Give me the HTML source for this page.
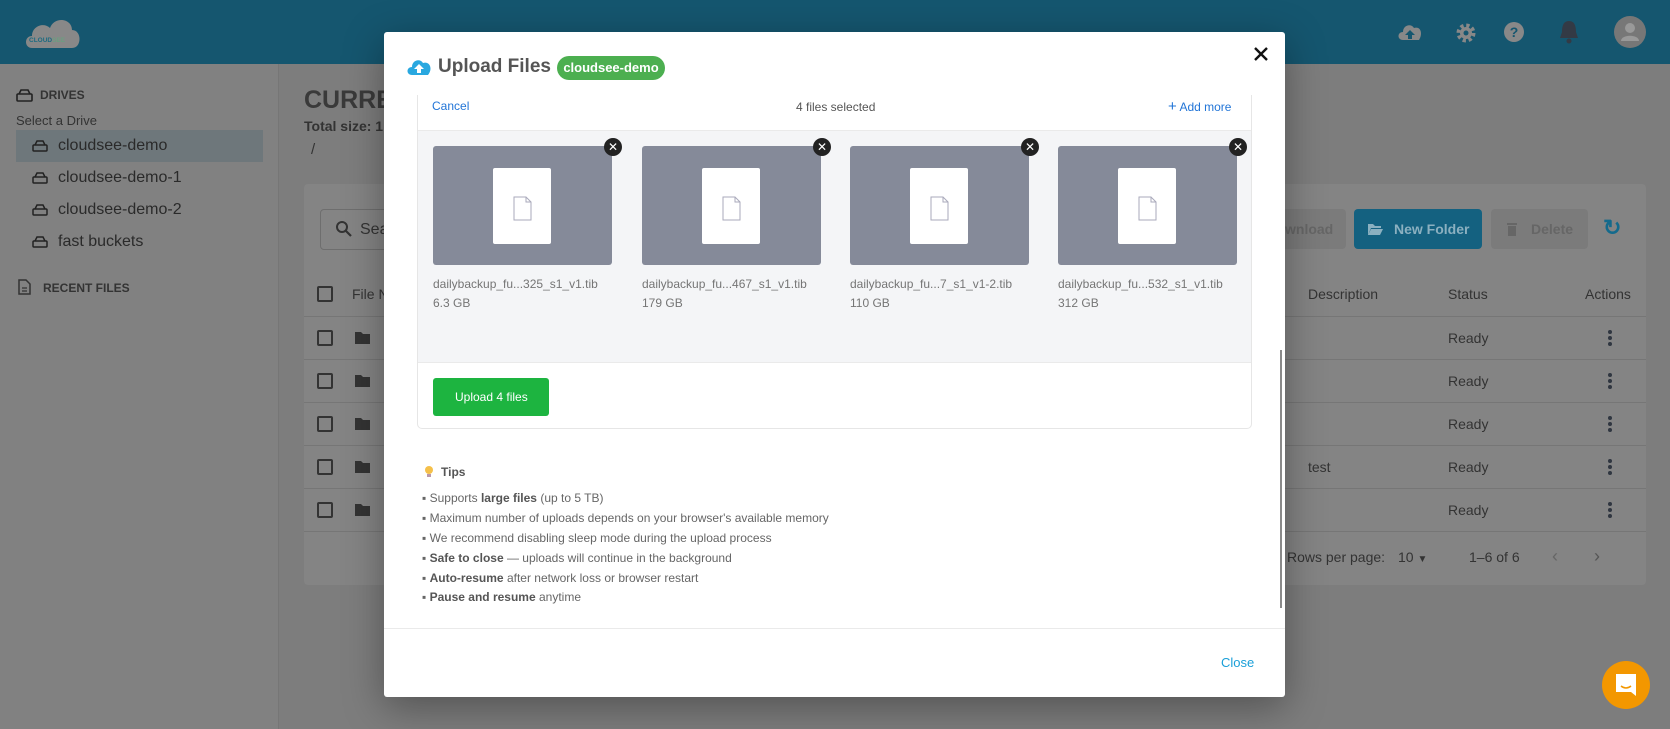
<!DOCTYPE html>
<html><head><meta charset="utf-8"><style>
*{box-sizing:border-box;margin:0;padding:0}
body{width:1670px;height:729px;overflow:hidden;font-family:"Liberation Sans",sans-serif;background:#7d7d7d;position:relative}
.abs{position:absolute}
.hdr{left:0;top:0;width:1670px;height:64px;background:#15566f}
.side{left:0;top:64px;width:279px;height:665px;background:#818181;border-right:1px solid #767676}
.t{position:absolute;white-space:nowrap}
.card{left:304px;top:184px;width:1342px;height:401px;background:#848484;border-radius:4px}
.row{position:absolute;left:304px;width:1342px;height:1px;background:#767676}
.modal{left:384px;top:32px;width:901px;height:665px;background:#fff;border-radius:3px;box-shadow:0 10px 40px rgba(0,0,0,.35)}
.thumb{position:absolute;top:146px;width:179px;height:119px;background:#858a99;border-radius:3px}
.doc{position:absolute;left:60px;top:22px;width:58px;height:76px;background:#fff;border-radius:2px}
.xbtn{position:absolute;right:-10px;top:-8px;width:18px;height:18px;border-radius:50%;background:#222;color:#fff;font-size:12px;line-height:18px;text-align:center}
.fn{position:absolute;font-size:12px;color:#757575;white-space:nowrap}
.tip{position:absolute;left:422px;font-size:12px;color:#666;white-space:nowrap}
.tip b{color:#555}
.dots{position:absolute;width:4px}
.dots i{display:block;width:4px;height:4px;border-radius:50%;background:#2f3640;margin-bottom:2px}
.cb{position:absolute;left:317px;width:16px;height:16px;border:2px solid #333;border-radius:2px}
.drv{position:absolute;left:32px}
</style></head><body>
<div class="abs hdr"></div>
<svg class="abs" style="left:24px;top:12px" width="64" height="40"><path d="M8 36 C0 36 0 24 8 24 C8 14 20 10 26 16 C30 4 48 6 48 18 C58 18 58 36 48 36Z" fill="#888"/><text x="5" y="30" font-size="6.5" font-weight="bold" fill="#1d6b80" font-family="Liberation Sans">CLOUD<tspan fill="#6b9e80">SEE</tspan></text></svg>
<svg class="abs" style="left:1397px;top:22px" width="26" height="20"><path d="M6 18 C0 18 0 10 6 10 C6 3 14 1 17 6 C24 4 26 12 22 18Z" fill="#888"/><path d="M13 8 L8 13 H11 V17 H15 V13 H18Z" fill="#15566f"/></svg>
<svg class="abs" style="left:1455px;top:22px" width="22" height="22"><circle cx="11" cy="11" r="7" fill="none" stroke="#888" stroke-width="5" stroke-dasharray="3 2.5"/><circle cx="11" cy="11" r="6" fill="#888"/><circle cx="11" cy="11" r="2.5" fill="#15566f"/></svg>
<svg class="abs" style="left:1503px;top:21px" width="22" height="22"><circle cx="11" cy="11" r="10" fill="#888"/><text x="11" y="16" font-size="14" font-weight="bold" fill="#15566f" text-anchor="middle" font-family="Liberation Sans">?</text></svg>
<svg class="abs" style="left:1558px;top:19px" width="22" height="26"><path d="M11 2 C5 2 4 8 4 13 L2 19 H20 L18 13 C18 8 17 2 11 2Z" fill="#333a45"/><circle cx="11" cy="22" r="2.5" fill="#333a45"/></svg>
<svg class="abs" style="left:1614px;top:16px" width="32" height="32"><circle cx="16" cy="16" r="16" fill="#777"/><circle cx="16" cy="12" r="5" fill="#999"/><path d="M7 25 C7 18 25 18 25 25Z" fill="#999"/></svg>

<div class="abs side"></div>
<svg class="abs" style="left:16px;top:89px" width="17" height="13"><rect x="1" y="5" width="15" height="7" rx="1" fill="none" stroke="#222" stroke-width="1.6"/><path d="M3 5 L5 1 H12 L14 5" fill="none" stroke="#222" stroke-width="1.6"/></svg>
<div class="t" style="left:40px;top:88px;font-size:12px;font-weight:bold;color:#333">DRIVES</div>
<div class="t" style="left:16px;top:113px;font-size:13px;color:#333">Select a Drive</div>
<div class="abs" style="left:16px;top:130px;width:247px;height:32px;background:#6e777b"></div>
<svg class="drv" style="top:140px" width="16" height="12"><rect x="1" y="5" width="14" height="6" rx="1" fill="none" stroke="#222" stroke-width="1.5"/><path d="M3 5 L5 1 H11 L13 5" fill="none" stroke="#222" stroke-width="1.5"/></svg>
<svg class="drv" style="top:172px" width="16" height="12"><rect x="1" y="5" width="14" height="6" rx="1" fill="none" stroke="#222" stroke-width="1.5"/><path d="M3 5 L5 1 H11 L13 5" fill="none" stroke="#222" stroke-width="1.5"/></svg>
<svg class="drv" style="top:204px" width="16" height="12"><rect x="1" y="5" width="14" height="6" rx="1" fill="none" stroke="#222" stroke-width="1.5"/><path d="M3 5 L5 1 H11 L13 5" fill="none" stroke="#222" stroke-width="1.5"/></svg>
<svg class="drv" style="top:236px" width="16" height="12"><rect x="1" y="5" width="14" height="6" rx="1" fill="none" stroke="#222" stroke-width="1.5"/><path d="M3 5 L5 1 H11 L13 5" fill="none" stroke="#222" stroke-width="1.5"/></svg>
<div class="t" style="left:58px;top:137px;font-size:16px;color:#2a2a2a">cloudsee-demo</div>
<div class="t" style="left:58px;top:169px;font-size:16px;color:#2a2a2a">cloudsee-demo-1</div>
<div class="t" style="left:58px;top:201px;font-size:16px;color:#2a2a2a">cloudsee-demo-2</div>
<div class="t" style="left:58px;top:233px;font-size:16px;color:#2a2a2a">fast buckets</div>
<svg class="abs" style="left:18px;top:279px" width="13" height="16"><path d="M1 1 H8 L12 5 V15 H1Z" fill="none" stroke="#333" stroke-width="1.5"/><path d="M4 9 H9 M4 12 H9" stroke="#333" stroke-width="1.2"/></svg>
<div class="t" style="left:43px;top:281px;font-size:12px;font-weight:bold;color:#333">RECENT FILES</div>

<div class="t" style="left:304px;top:86px;font-size:25px;font-weight:bold;color:#3a3a3a">CURRENT</div>
<div class="t" style="left:304px;top:118px;font-size:14px;font-weight:bold;color:#333">Total size: 1</div>
<div class="t" style="left:311px;top:141px;font-size:15px;color:#333">/</div>
<div class="abs card"></div>
<div class="abs" style="left:320px;top:209px;width:80px;height:41px;border:1px solid #6e6e6e;border-radius:4px"></div>
<svg class="abs" style="left:335px;top:220px" width="18" height="18"><circle cx="7" cy="7" r="5" fill="none" stroke="#333" stroke-width="2"/><path d="M11 11 L16 16" stroke="#333" stroke-width="2.2"/></svg>
<div class="t" style="left:360px;top:221px;font-size:16px;color:#333">Sea</div>
<div class="abs" style="left:1280px;top:209px;width:66px;height:40px;background:#7b7b7b;border-radius:4px"></div>
<div class="t" style="left:1285px;top:221px;font-size:14px;color:#666;font-weight:bold">wnload</div>
<div class="abs" style="left:1354px;top:209px;width:128px;height:40px;background:#146180;border-radius:4px"></div>
<svg class="abs" style="left:1367px;top:222px" width="17" height="14"><path d="M1 2 H6 L8 4 H14 V6 H4 L1 13Z M4 7 H16 L13 13 H1Z" fill="#8bb0c0"/></svg>
<div class="t" style="left:1394px;top:221px;font-size:14px;color:#8bb0c0;font-weight:bold">New Folder</div>
<div class="abs" style="left:1491px;top:209px;width:97px;height:40px;background:#7b7b7b;border-radius:4px"></div>
<svg class="abs" style="left:1506px;top:221px" width="12" height="16"><path d="M1 2 H11 V4 H1Z M2 5 H10 V15 H2Z" fill="#666"/></svg>
<div class="t" style="left:1531px;top:221px;font-size:14px;color:#666;font-weight:bold">Delete</div>
<div class="t" style="left:1603px;top:215px;font-size:22px;color:#146a8c;font-weight:bold">↻</div>
<div class="cb" style="top:286px"></div>
<div class="t" style="left:352px;top:286px;font-size:14px;color:#333">File N</div>
<div class="t" style="left:1308px;top:286px;font-size:14px;color:#333">Description</div>
<div class="t" style="left:1448px;top:286px;font-size:14px;color:#333">Status</div>
<div class="t" style="left:1585px;top:286px;font-size:14px;color:#333">Actions</div>
<div class="row" style="top:316px"></div><div class="row" style="top:359px"></div><div class="row" style="top:402px"></div><div class="row" style="top:445px"></div><div class="row" style="top:488px"></div><div class="row" style="top:531px"></div>
<div class="cb" style="top:330px"></div><div class="cb" style="top:373px"></div><div class="cb" style="top:416px"></div><div class="cb" style="top:459px"></div><div class="cb" style="top:502px"></div>
<svg class="abs" style="left:354px;top:330px" width="20" height="16"><path d="M1 2 H7 L9 4 H16 V14 H1Z" fill="#333"/></svg>
<svg class="abs" style="left:354px;top:373px" width="20" height="16"><path d="M1 2 H7 L9 4 H16 V14 H1Z" fill="#333"/></svg>
<svg class="abs" style="left:354px;top:416px" width="20" height="16"><path d="M1 2 H7 L9 4 H16 V14 H1Z" fill="#333"/></svg>
<svg class="abs" style="left:354px;top:459px" width="20" height="16"><path d="M1 2 H7 L9 4 H16 V14 H1Z" fill="#333"/></svg>
<svg class="abs" style="left:354px;top:502px" width="20" height="16"><path d="M1 2 H7 L9 4 H16 V14 H1Z" fill="#333"/></svg>
<div class="t" style="left:1448px;top:330px;font-size:14px;color:#333">Ready</div>
<div class="t" style="left:1448px;top:373px;font-size:14px;color:#333">Ready</div>
<div class="t" style="left:1448px;top:416px;font-size:14px;color:#333">Ready</div>
<div class="t" style="left:1308px;top:459px;font-size:14px;color:#333">test</div>
<div class="t" style="left:1448px;top:459px;font-size:14px;color:#333">Ready</div>
<div class="t" style="left:1448px;top:502px;font-size:14px;color:#333">Ready</div>
<div class="dots" style="left:1608px;top:330px"><i></i><i></i><i></i></div>
<div class="dots" style="left:1608px;top:373px"><i></i><i></i><i></i></div>
<div class="dots" style="left:1608px;top:416px"><i></i><i></i><i></i></div>
<div class="dots" style="left:1608px;top:459px"><i></i><i></i><i></i></div>
<div class="dots" style="left:1608px;top:502px"><i></i><i></i><i></i></div>
<div class="t" style="left:1287px;top:549px;font-size:14px;color:#333">Rows per page:</div>
<div class="t" style="left:1398px;top:549px;font-size:14px;color:#333">10 <span style="font-size:10px">▼</span></div>
<div class="t" style="left:1469px;top:549px;font-size:14px;color:#333">1–6 of 6</div>
<div class="t" style="left:1552px;top:546px;font-size:18px;color:#666">‹</div>
<div class="t" style="left:1594px;top:546px;font-size:18px;color:#555">›</div>

<div class="abs modal"></div>
<svg class="abs" style="left:406px;top:57px" width="26" height="19"><path d="M6 18 C0 18 0 10 6 10 C6 3 14 1 17 6 C24 4 27 12 22 18Z" fill="#29a8e0"/><path d="M13 7 L8 12 H11 V16 H15 V12 H18Z" fill="#fff"/></svg>
<div class="t" style="left:438px;top:56px;font-size:19px;font-weight:bold;color:#555">Upload Files</div>
<div class="t" style="left:557px;top:56px;width:108px;height:24px;text-align:center;border-radius:12px;background:#4caf50;font-size:13px;line-height:24px;font-weight:bold;color:#fff">cloudsee-demo</div>
<svg class="abs" style="left:1253px;top:46px" width="16" height="16"><path d="M2 2 L14 14 M14 2 L2 14" stroke="#111" stroke-width="2.4"/></svg>

<div class="abs" style="left:417px;top:95px;width:835px;height:334px;border:1px solid #e6e6e6;border-top:none;border-radius:0 0 5px 5px"></div>
<div class="t" style="left:432px;top:99px;font-size:12px;color:#2275d7">Cancel</div>
<div class="t" style="left:796px;top:100px;font-size:12px;color:#555">4 files selected</div>
<div class="t" style="left:1168px;top:98px;font-size:12px;color:#2275d7"><span style="font-size:15px">+</span> Add more</div>
<div class="abs" style="left:418px;top:130px;width:833px;height:233px;background:#f4f5f7;border-top:1px solid #eaeaea;border-bottom:1px solid #eaeaea"></div>

<div class="thumb" style="left:433px"><div class="doc"><svg width="58" height="76"><path d="M21 29 H33 L38 34 V52 H21Z M33 29 V34 H38" fill="none" stroke="#aab" stroke-width="1"/></svg></div><div class="xbtn">✕</div></div>
<div class="thumb" style="left:642px"><div class="doc"><svg width="58" height="76"><path d="M21 29 H33 L38 34 V52 H21Z M33 29 V34 H38" fill="none" stroke="#aab" stroke-width="1"/></svg></div><div class="xbtn">✕</div></div>
<div class="thumb" style="left:850px"><div class="doc"><svg width="58" height="76"><path d="M21 29 H33 L38 34 V52 H21Z M33 29 V34 H38" fill="none" stroke="#aab" stroke-width="1"/></svg></div><div class="xbtn">✕</div></div>
<div class="thumb" style="left:1058px"><div class="doc"><svg width="58" height="76"><path d="M21 29 H33 L38 34 V52 H21Z M33 29 V34 H38" fill="none" stroke="#aab" stroke-width="1"/></svg></div><div class="xbtn">✕</div></div>
<div class="fn" style="left:433px;top:277px">dailybackup_fu...325_s1_v1.tib</div><div class="fn" style="left:433px;top:296px">6.3 GB</div>
<div class="fn" style="left:642px;top:277px">dailybackup_fu...467_s1_v1.tib</div><div class="fn" style="left:642px;top:296px">179 GB</div>
<div class="fn" style="left:850px;top:277px">dailybackup_fu...7_s1_v1-2.tib</div><div class="fn" style="left:850px;top:296px">110 GB</div>
<div class="fn" style="left:1058px;top:277px">dailybackup_fu...532_s1_v1.tib</div><div class="fn" style="left:1058px;top:296px">312 GB</div>

<div class="abs" style="left:433px;top:378px;width:116px;height:38px;background:#1db440;border-radius:3px"></div>
<div class="t" style="left:455px;top:390px;font-size:12px;color:#fff">Upload 4 files</div>

<div class="abs" style="left:1280px;top:350px;width:2px;height:258px;background:#8a8a8a"></div>

<svg class="abs" style="left:424px;top:465px" width="10" height="14"><circle cx="5" cy="5" r="4" fill="#f5c04a"/><rect x="3" y="9" width="4" height="3" fill="#b9a"/></svg>
<div class="t" style="left:441px;top:465px;font-size:12px;color:#555;font-weight:bold">Tips</div>
<div class="tip" style="top:491px">▪ Supports <b>large files</b> (up to 5 TB)</div>
<div class="tip" style="top:511px">▪ Maximum number of uploads depends on your browser's available memory</div>
<div class="tip" style="top:531px">▪ We recommend disabling sleep mode during the upload process</div>
<div class="tip" style="top:551px">▪ <b>Safe to close</b> — uploads will continue in the background</div>
<div class="tip" style="top:571px">▪ <b>Auto-resume</b> after network loss or browser restart</div>
<div class="tip" style="top:590px">▪ <b>Pause and resume</b> anytime</div>

<div class="abs" style="left:384px;top:628px;width:901px;height:1px;background:#eaeaea"></div>
<div class="t" style="left:1221px;top:655px;font-size:13px;color:#1a9fd8">Close</div>

<div class="abs" style="left:1602px;top:661px;width:48px;height:48px;border-radius:50%;background:#f39700"></div>
<svg class="abs" style="left:1613px;top:672px" width="26" height="26"><path d="M3 2 H23 V24 L18 20 H3Z" fill="#fff"/><path d="M8 14 Q13 18 18 14" stroke="#f39700" stroke-width="1.5" fill="none"/></svg>
</body></html>
